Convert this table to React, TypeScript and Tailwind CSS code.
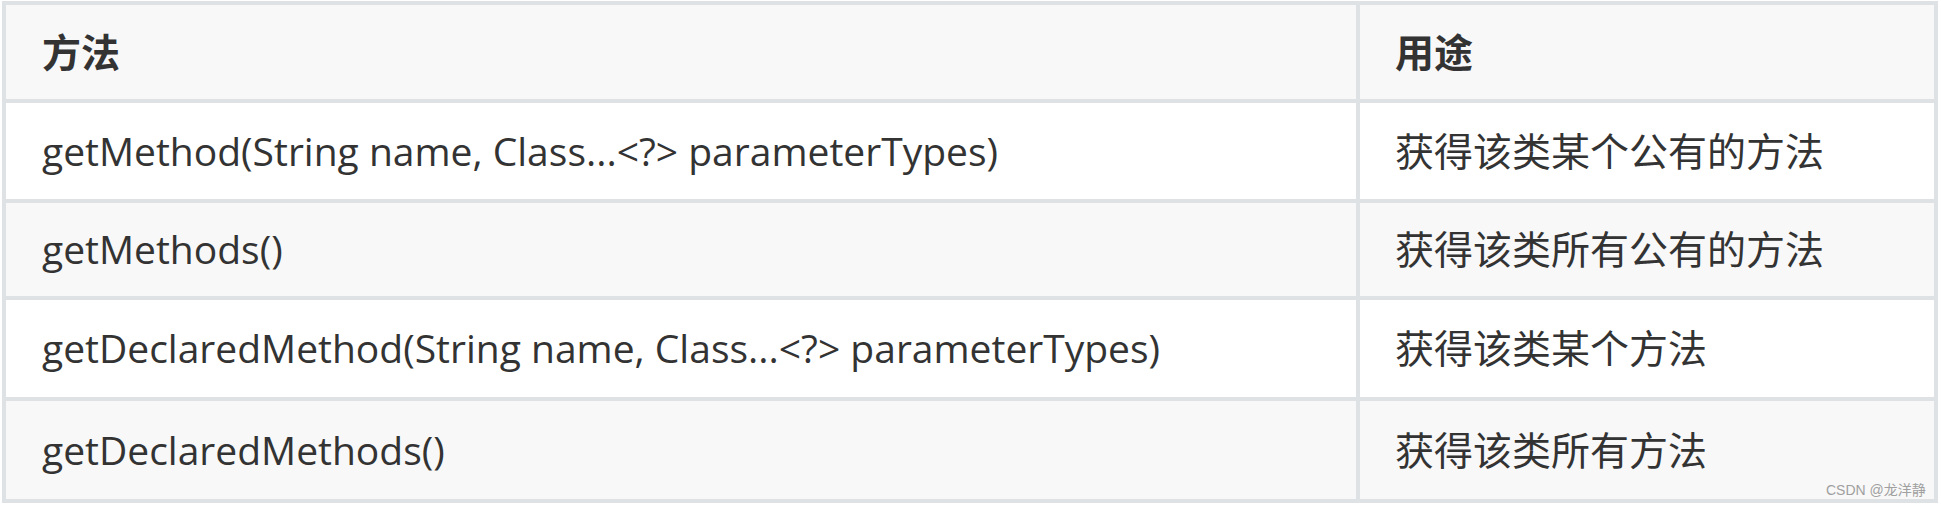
import React from "react";

const rows = [
  { m: "getMethod(String name, Class...<?> parameterTypes)", u: "获得该类某个公有的方法", h: "h-[100px]", bg: "bg-white" },
  { m: "getMethods()", u: "获得该类所有公有的方法", h: "h-[97px]", bg: "bg-[#f8f8f8]" },
  { m: "getDeclaredMethod(String name, Class...<?> parameterTypes)", u: "获得该类某个方法", h: "h-[101px]", bg: "bg-white" },
  { m: "getDeclaredMethods()", u: "获得该类所有方法", h: "h-[102px]", bg: "bg-[#f8f8f8]" },
];

export default function App() {
  return (
    <div
      className="relative w-[1941px] h-[508px] bg-white pt-[1px] pl-[2px] text-[#333333] text-[39px]"
      style={{ fontFamily: '"Open Sans", "Noto Sans CJK SC", sans-serif' }}
    >
      <div className="w-[1936px] border-4 border-[#dfe2e5]">
        <div className="flex h-[94px] bg-[#f8f8f8]">
          <div className="w-[1350px] pl-[36px] flex items-center font-bold">方法</div>
          <div className="flex-1 border-l-4 border-[#dfe2e5] pl-[35px] flex items-center font-bold">用途</div>
        </div>
        {rows.map((r, i) => (
          <div key={i} className={`flex border-t-4 border-[#dfe2e5] ${r.h} ${r.bg}`}>
            <div className="w-[1350px] pl-[36px] flex items-center whitespace-nowrap">{r.m}</div>
            <div className="flex-1 border-l-4 border-[#dfe2e5] pl-[35px] flex items-center whitespace-nowrap">{r.u}</div>
          </div>
        ))}
      </div>
      <div
        className="absolute left-[1826px] top-[481px] text-[14px] leading-[18px] text-[#a0a0a0] whitespace-nowrap"
        style={{ fontFamily: '"Liberation Sans", "Noto Sans CJK SC", sans-serif' }}
      >
        CSDN @龙洋静
      </div>
    </div>
  );
}
